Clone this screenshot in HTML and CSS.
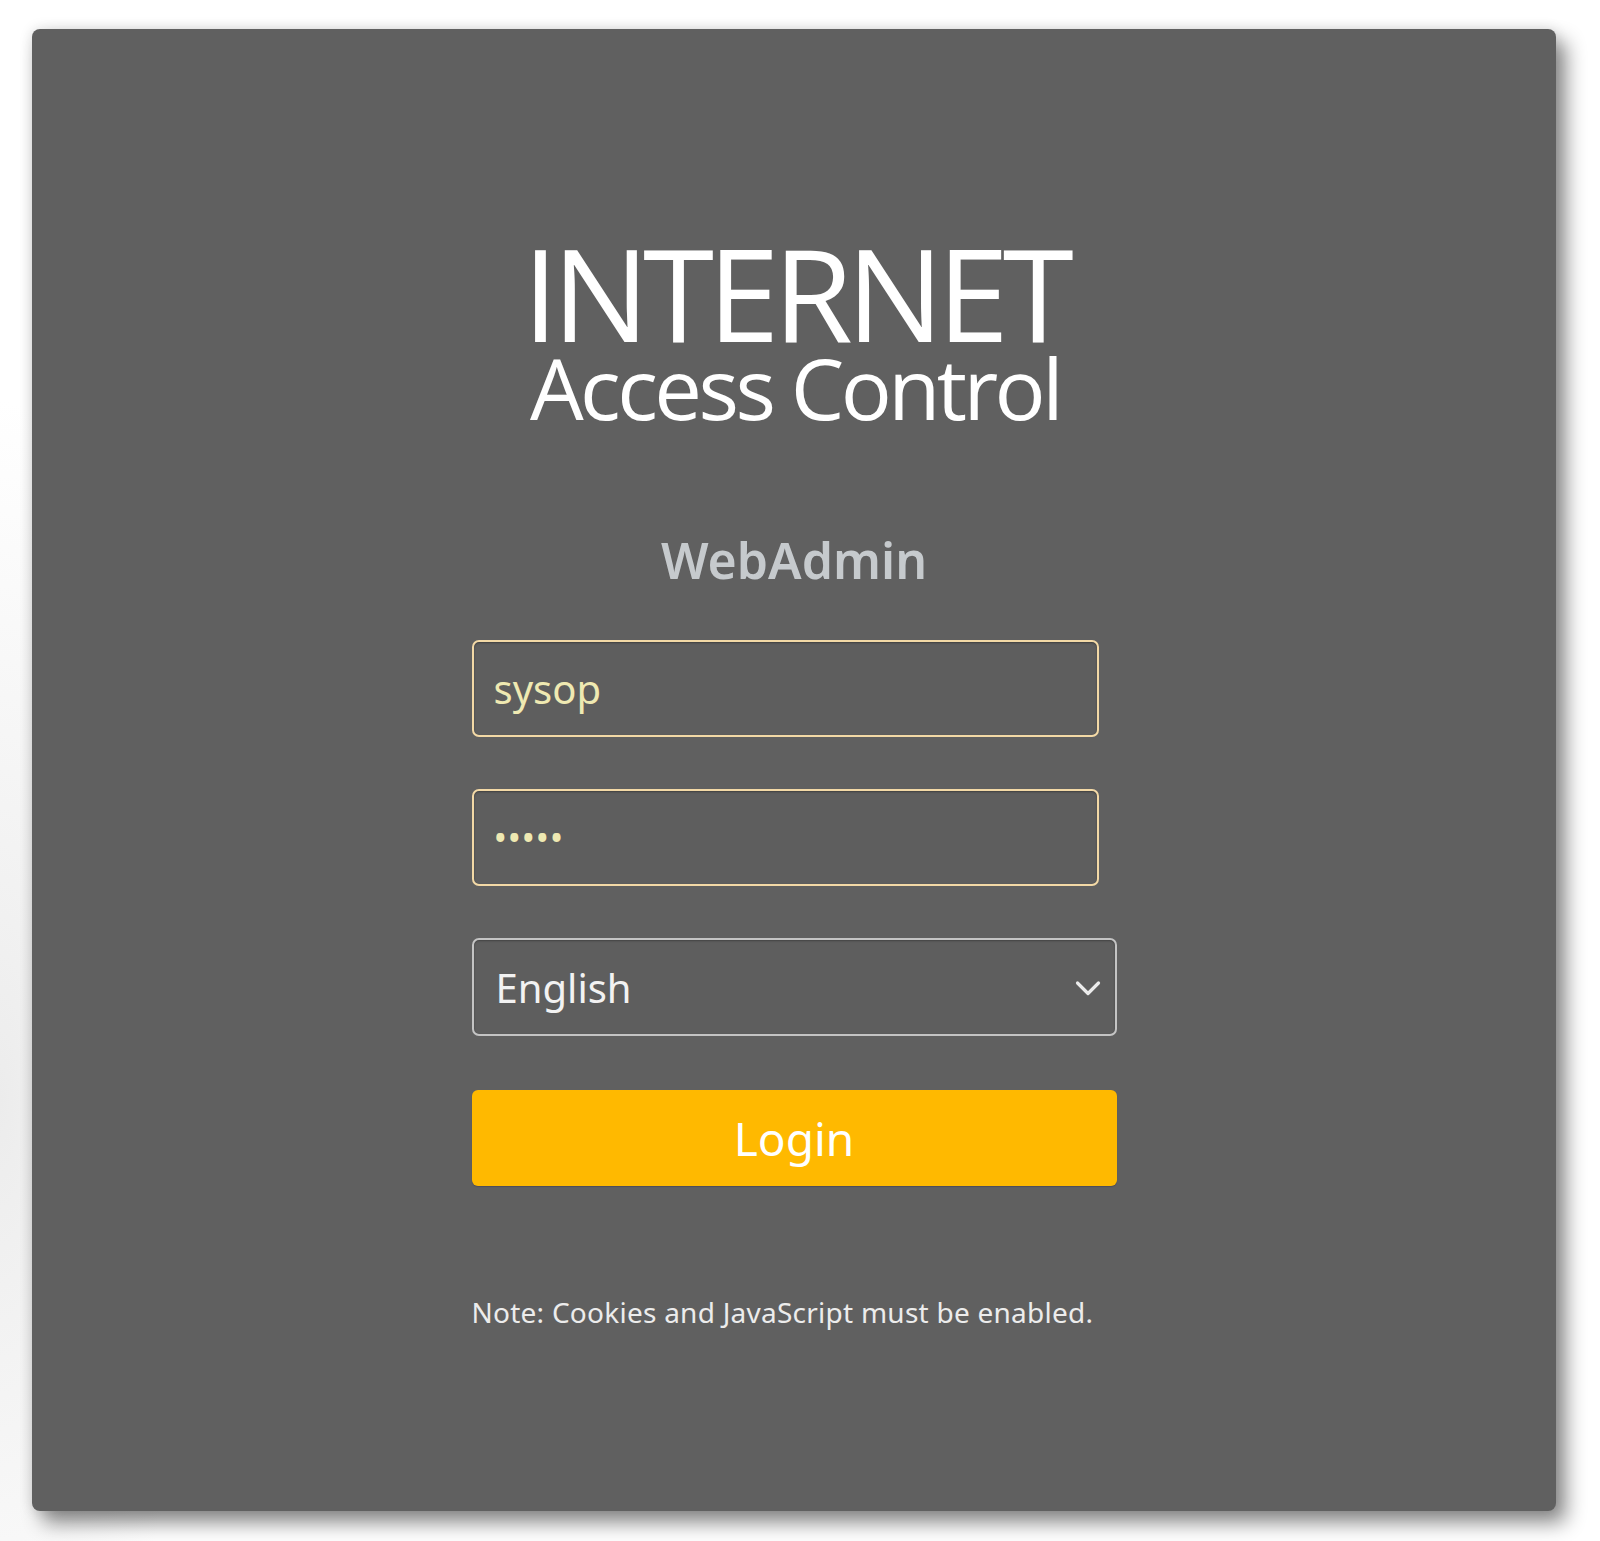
FILE: index.html
```html
<!DOCTYPE html>
<html lang="en">
<head>
<meta charset="utf-8">
<title>Internet Access Control - WebAdmin</title>
<link rel="stylesheet" href="styles.css">
</head>
<body>
<div class="page">
  <main class="card">
    <div class="logo">
      <div class="logo-line1">INTERNET</div>
      <div class="logo-line2">Access Control</div>
    </div>
    <h1 class="title">WebAdmin</h1>
    <form class="form">
      <input class="field" type="text" value="sysop">
      <input class="field pass" type="password" value="12345">
      <div class="select-wrap">
        <select class="select">
          <option>English</option>
        </select>
        <svg class="chevron" width="26" height="16" viewBox="0 0 26 16"><path d="M2.5 3 L13 13.5 L23.5 3" fill="none" stroke="#ececec" stroke-width="3.2" stroke-linecap="round" stroke-linejoin="round"/></svg>
      </div>
      <button class="login" type="button">Login</button>
    </form>
    <p class="note">Note: Cookies and JavaScript must be enabled.</p>
  </main>
</div>
</body>
</html>
```

FILE: styles.css
```css
html, body {
  margin: 0;
  padding: 0;
}
body {
  background: #ffffff;
  font-family: "Noto Sans", "Open Sans", sans-serif;
  height: 1541px;
  overflow: hidden;
}
.page {
  padding: 29px 44px 30px 32px;
  background: radial-gradient(ellipse 200px 700px at 0px 1100px, #ececec 0%, rgba(255,255,255,0) 100%);
  height: 1541px;
  box-sizing: border-box;
}
.card {
  height: 1482px;
  box-sizing: border-box;
  background: #606060;
  border-radius: 8px;
  box-shadow: 0 0 14px rgba(0,0,0,0.12), 10px 12px 20px rgba(0,0,0,0.45);
  display: flex;
  flex-direction: column;
  align-items: center;
  padding-top: 208px;
}
.logo {
  display: flex;
  flex-direction: column;
  align-items: center;
  color: #ffffff;
  font-family: "Open Sans", sans-serif;
  font-weight: 400;
  margin-left: 2px;
}
.logo-line1 {
  font-size: 129px;
  line-height: 110px;
  letter-spacing: -6.3px;
}
.logo-line2 {
  font-size: 85px;
  line-height: 80px;
  letter-spacing: -3.6px;
}
.title {
  margin: 103px 0 0 0;
  font-size: 50px;
  line-height: 60px;
  font-weight: 600;
  color: #c6cacd;
}
.form {
  width: 645px;
  margin-top: 50px;
  display: flex;
  flex-direction: column;
  align-items: flex-start;
}
.field {
  width: 627px;
  height: 97px;
  box-sizing: border-box;
  margin: 0 0 52px 0;
  padding: 0 20px;
  border: 2.5px solid #f3d9a6;
  border-radius: 7px;
  background: #5e5e5e;
  box-shadow: inset 0 1px 2px rgba(0,0,0,0.35);
  color: #efe9b2;
  font-family: "Noto Sans", sans-serif;
  font-size: 40px;
  outline: none;
}
.pass {
  font-size: 36px;
  letter-spacing: 0.5px;
}
.select-wrap {
  position: relative;
  width: 645px;
}
.select {
  display: block;
  width: 645px;
  height: 98px;
  box-sizing: border-box;
  margin: 0;
  padding: 0 22px;
  border: 2.5px solid #c4c4c4;
  border-radius: 7px;
  background: #5e5e5e;
  box-shadow: inset 0 1px 2px rgba(0,0,0,0.3);
  color: #f2f2f2;
  font-family: "Noto Sans", sans-serif;
  font-size: 40px;
  appearance: none;
  -webkit-appearance: none;
  outline: none;
}
.chevron {
  position: absolute;
  right: 16px;
  top: 42px;
}
.login {
  width: 645px;
  height: 96px;
  margin-top: 54px;
  border: none;
  border-radius: 6px;
  background: #ffb900;
  box-shadow: 0 1px 1px rgba(60,60,80,0.5);
  color: #ffffff;
  font-family: "Noto Sans", sans-serif;
  font-size: 46px;
  line-height: 96px;
  padding: 0;
}
.note {
  margin: 108px 0 0 0;
  width: 645px;
  font-size: 28px;
  line-height: 36px;
  color: #ececec;
  letter-spacing: 0.25px;
  white-space: nowrap;
}
```
